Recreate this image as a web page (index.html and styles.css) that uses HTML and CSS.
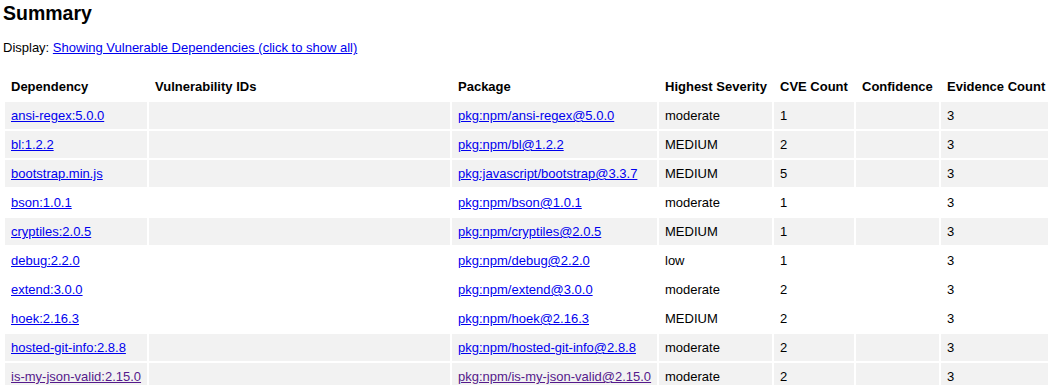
FILE: index.html
```html
<!DOCTYPE html>
<html lang="en">
<head>
<meta charset="utf-8">
<title>Dependency-Check Report</title>
<link rel="stylesheet" href="styles.css">
</head>
<body>
<h2 class="title">Summary</h2>
<p class="display">Display: <a href="#">Showing Vulnerable Dependencies (click to show all)</a></p>
<table class="summary">
  <thead>
    <tr>
      <th class="c-dep">Dependency</th>
      <th class="c-vid">Vulnerability IDs</th>
      <th class="c-pkg">Package</th>
      <th class="c-sev">Highest Severity</th>
      <th class="c-cve">CVE Count</th>
      <th class="c-conf">Confidence</th>
      <th class="c-ev">Evidence Count</th>
    </tr>
  </thead>
  <tbody>
    <tr class="shade">
      <td><a href="#">ansi-regex:5.0.0</a></td><td></td>
      <td><a href="#">pkg:npm/ansi-regex@5.0.0</a></td>
      <td>moderate</td><td>1</td><td></td><td>3</td>
    </tr>
    <tr class="shade">
      <td><a href="#">bl:1.2.2</a></td><td></td>
      <td><a href="#">pkg:npm/bl@1.2.2</a></td>
      <td>MEDIUM</td><td>2</td><td></td><td>3</td>
    </tr>
    <tr class="shade">
      <td><a href="#">bootstrap.min.js</a></td><td></td>
      <td><a href="#">pkg:javascript/bootstrap@3.3.7</a></td>
      <td>MEDIUM</td><td>5</td><td></td><td>3</td>
    </tr>
    <tr>
      <td><a href="#">bson:1.0.1</a></td><td></td>
      <td><a href="#">pkg:npm/bson@1.0.1</a></td>
      <td>moderate</td><td>1</td><td></td><td>3</td>
    </tr>
    <tr class="shade">
      <td><a href="#">cryptiles:2.0.5</a></td><td></td>
      <td><a href="#">pkg:npm/cryptiles@2.0.5</a></td>
      <td>MEDIUM</td><td>1</td><td></td><td>3</td>
    </tr>
    <tr>
      <td><a href="#">debug:2.2.0</a></td><td></td>
      <td><a href="#">pkg:npm/debug@2.2.0</a></td>
      <td>low</td><td>1</td><td></td><td>3</td>
    </tr>
    <tr>
      <td><a href="#">extend:3.0.0</a></td><td></td>
      <td><a href="#">pkg:npm/extend@3.0.0</a></td>
      <td>moderate</td><td>2</td><td></td><td>3</td>
    </tr>
    <tr>
      <td><a href="#">hoek:2.16.3</a></td><td></td>
      <td><a href="#">pkg:npm/hoek@2.16.3</a></td>
      <td>MEDIUM</td><td>2</td><td></td><td>3</td>
    </tr>
    <tr class="shade">
      <td><a href="#">hosted-git-info:2.8.8</a></td><td></td>
      <td><a href="#">pkg:npm/hosted-git-info@2.8.8</a></td>
      <td>moderate</td><td>2</td><td></td><td>3</td>
    </tr>
    <tr class="shade visited">
      <td><a href="#">is-my-json-valid:2.15.0</a></td><td></td>
      <td><a href="#">pkg:npm/is-my-json-valid@2.15.0</a></td>
      <td>moderate</td><td>2</td><td></td><td>3</td>
    </tr>
  </tbody>
</table>
</body>
</html>
```
FILE: styles.css
```css
html {
  overflow: hidden;
}

body {
  margin: 0;
  padding: 2px 0 0 3px;
  font-family: "Liberation Sans", Arial, sans-serif;
  font-size: 13px;
  color: #000;
  background: #fff;
}

a {
  color: #0000ee;
  text-decoration: underline;
}

.title {
  margin: 0 0 16px;
  font-size: 19.5px;
  line-height: 22px;
  font-weight: bold;
}

.display {
  margin: 0 0 16px;
  line-height: 15px;
}

.summary {
  table-layout: fixed;
  width: 1070px;
  border-collapse: separate;
  border-spacing: 2px;
  margin: 0;
}

.summary th,
.summary td {
  box-sizing: border-box;
  height: 27px;
  padding: 6px 6px;
  line-height: 15px;
  text-align: left;
  vertical-align: middle;
  white-space: nowrap;
  overflow: hidden;
}

.summary th {
  font-weight: bold;
}

.c-dep { width: 142px; }
.c-vid { width: 301px; }
.c-pkg { width: 205px; }
.c-sev { width: 113px; }
.c-cve { width: 80px; }
.c-conf { width: 83px; }
.c-ev { width: 130px; }

.shade td {
  background: #f2f2f2;
}

.visited a {
  color: #551a8b;
}
```
